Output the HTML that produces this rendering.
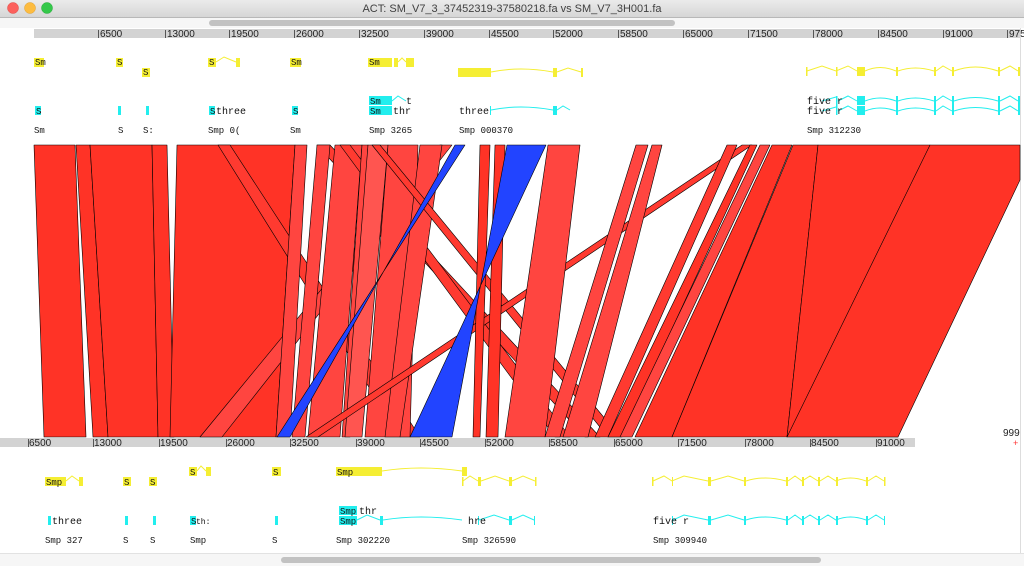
<!DOCTYPE html>
<html><head><meta charset="utf-8"><style>
html,body{margin:0;padding:0;width:1024px;height:566px;overflow:hidden;background:#fff}
svg{display:block}
.r{font-family:"Liberation Sans",sans-serif;font-size:10px;fill:#222}
.m{font-family:"Liberation Mono",monospace;font-size:10px;fill:#111}
.s{font-family:"Liberation Mono",monospace;font-size:9px;fill:#111}
</style></head><body>
<svg width="1024" height="566" viewBox="0 0 1024 566" xmlns="http://www.w3.org/2000/svg">
<defs><linearGradient id="tb" x1="0" y1="0" x2="0" y2="1"><stop offset="0" stop-color="#ebebeb"/><stop offset="1" stop-color="#d6d6d6"/></linearGradient></defs>
<rect x="0" y="0" width="1024" height="17" fill="url(#tb)"/>
<line x1="0" y1="17.5" x2="1024" y2="17.5" stroke="#b8b8b8"/>
<circle cx="13" cy="8" r="5.5" fill="#fc605c" stroke="#de4a45" stroke-width=".5"/>
<circle cx="30" cy="8" r="5.5" fill="#fdbc40" stroke="#de9f2e" stroke-width=".5"/>
<circle cx="47" cy="8" r="5.5" fill="#34c84a" stroke="#27a83a" stroke-width=".5"/>
<text x="512" y="12" text-anchor="middle" font-family="Liberation Sans,sans-serif" font-size="11" fill="#404040">ACT: SM_V7_3_37452319-37580218.fa vs SM_V7_3H001.fa</text>
<rect x="0" y="18" width="1024" height="10" fill="#f6f6f6"/>
<rect x="209" y="20" width="466" height="6" rx="3" fill="#c2c2c2"/>
<line x1="1020.5" y1="28" x2="1020.5" y2="553" stroke="#ddd"/>

<rect x="34" y="29" width="986" height="9" fill="#d3d3d3"/>
<g stroke="#555" stroke-width="1">
<path d="M98.5 30v8M165.5 30v8M229.5 30v8M294.5 30v8M359.5 30v8M424.5 30v8M489.5 30v8M553.5 30v8M618.5 30v8M683.5 30v8M748.5 30v8M813.5 30v8M878.5 30v8M943.5 30v8M1007.5 30v8"/>
</g>
<g class="r"><text x="100" y="37">6500</text><text x="167" y="37">13000</text><text x="231" y="37">19500</text><text x="296" y="37">26000</text><text x="361" y="37">32500</text><text x="426" y="37">39000</text><text x="491" y="37">45500</text><text x="555" y="37">52000</text><text x="620" y="37">58500</text><text x="685" y="37">65000</text><text x="750" y="37">71500</text><text x="815" y="37">78000</text><text x="880" y="37">84500</text><text x="945" y="37">91000</text><text x="1009" y="37">975</text></g>

<g fill="#f5ee33">
<rect x="34" y="58" width="10" height="9"/><rect x="116" y="58" width="7" height="9"/><rect x="142" y="68" width="8" height="9"/>
<rect x="208" y="58" width="8" height="9"/><rect x="236" y="58" width="4" height="9"/><rect x="290" y="58" width="11" height="9"/>
<rect x="368" y="58" width="24" height="9"/><rect x="394" y="58" width="4" height="9"/><rect x="406" y="58" width="8" height="9"/>
<rect x="458" y="68" width="33" height="9"/><rect x="553" y="68" width="4" height="9"/><rect x="581" y="68" width="2" height="9"/>
<rect x="857" y="67" width="8" height="9"/><rect x="806" y="67" width="1.5" height="9"/><rect x="836" y="67" width="1.5" height="9"/><rect x="896" y="67" width="2" height="9"/><rect x="934" y="67" width="2" height="9"/><rect x="952" y="67" width="2" height="9"/><rect x="998" y="67" width="2" height="9"/><rect x="1018" y="67" width="2" height="9"/>
</g>
<g fill="none" stroke="#f5ee33" stroke-width="1">
<path d="M216 62L224 57L236 62M398 62L402 58L406 62M491 72Q520 66 553 72M557 72L568 68L581 72"/>
<path d="M807 71L822 66L836 71L848 66L857 71M865 71Q880 64 896 71M898 71Q915 65 934 71M936 71L943 66L952 71M954 71Q975 63 998 71M1000 71L1010 66L1018 71"/>
</g>
<g class="s"><text x="35" y="65">Sm</text><text x="117" y="65">S</text><text x="143" y="75">S</text><text x="209" y="65">S</text><text x="291" y="65">Sm</text><text x="369" y="65">Sm</text></g>

<g fill="#22eeee">
<rect x="369" y="96" width="23" height="9"/><rect x="369" y="106" width="23" height="9"/>
<rect x="35" y="106" width="6" height="9"/><rect x="118" y="106" width="3" height="9"/><rect x="146" y="106" width="3" height="9"/><rect x="209" y="106" width="6" height="9"/><rect x="292" y="106" width="6" height="9"/>
<rect x="553" y="106" width="4" height="9"/>
<rect x="857" y="96" width="8" height="9"/><rect x="857" y="106" width="8" height="9"/>
<path d="M836 96h1.5v19h-1.5zM896 96h2v19h-2zM934 96h2v19h-2zM952 96h2v19h-2zM998 96h2v19h-2zM1018 96h2v19h-2zM490 106h1v9h-1z"/>
</g>
<g fill="none" stroke="#22eeee" stroke-width="1">
<path d="M392 101L398 96L406 101M491 110Q520 104 553 110M557 110L563 106L570 110"/>
<path d="M822 101L836 97M838 101L848 96L857 101M865 101Q880 95 896 101M898 101Q915 95 934 101M936 101L943 96L952 101M954 101Q975 94 998 101M1000 101L1010 96L1018 101"/>
<path d="M822 111L836 107M838 111L848 106L857 111M865 111Q880 105 896 111M898 111Q915 105 934 111M936 111L943 106L952 111M954 111Q975 104 998 111M1000 111L1010 106L1018 111"/>
</g>
<g class="s"><text x="36" y="114">S</text><text x="210" y="114">S</text><text x="293" y="114">S</text><text x="370" y="104">Sm</text><text x="370" y="114">Sm</text></g>
<g class="m"><text x="216" y="114">three</text><text x="406" y="104">t</text><text x="393" y="114">thr</text><text x="459" y="114">three</text><text x="807" y="104">five r</text><text x="807" y="114">five r</text></g>
<g class="s"><text x="34" y="133">Sm</text><text x="118" y="133">S</text><text x="143" y="133">S:</text><text x="208" y="133">Smp 0(</text><text x="290" y="133">Sm</text><text x="369" y="133">Smp 3265</text><text x="459" y="133">Smp 000370</text><text x="807" y="133">Smp 312230</text></g>

<g stroke="#000" stroke-width="0.6" stroke-linejoin="round">
<polygon fill="#ff3326" points="34,145 75,145 86,437 44,437"/>
<polygon fill="#ff3326" points="76,145 90,145 108,437 93,437"/>
<polygon fill="#ff3326" points="90,145 152,145 158,437 108,437"/>
<polygon fill="#ff3326" points="152,145 167,145 174,437 158,437"/>
<polygon fill="#ff3326" points="177,145 295,145 276,437 170,437"/>
<polygon fill="#ff3a30" points="218,145 230,145 420,437 400,437"/>
<polygon fill="#ff4540" points="440,145 452,145 222,437 200,437"/>
<polygon fill="#ff4540" points="295,145 307,145 290,437 276,437"/>
<polygon fill="#ff3a30" points="317,145 330,145 600,437 585,437"/>
<polygon fill="#ff4540" points="317,145 330,145 305,437 292,437"/>
<polygon fill="#ff4540" points="335,145 362,145 340,437 308,437"/>
<polygon fill="#ff3a30" points="340,145 350,145 570,437 555,437"/>
<polygon fill="#ff4540" points="362,145 368,145 350,437 342,437"/>
<polygon fill="#ff5550" points="368,145 388,145 362,437 345,437"/>
<polygon fill="#ff4540" points="388,145 418,145 410,437 365,437"/>
<polygon fill="#ff4540" points="420,145 442,145 400,437 385,437"/>
<polygon fill="#ff3a30" points="372,145 380,145 620,437 608,437"/>
<polygon fill="#ff3a30" points="742,145 752,145 318,437 306,437"/>
<polygon fill="#ff3326" points="480,145 490,145 480,437 473,437"/>
<polygon fill="#ff3326" points="495,145 505,145 498,437 486,437"/>
<polygon fill="#ff4540" points="548,145 580,145 545,437 505,437"/>
<polygon fill="#ff4540" points="636,145 648,145 560,437 545,437"/>
<polygon fill="#ff4540" points="652,145 662,145 588,437 563,437"/>
<polygon fill="#ff3a30" points="727,145 737,145 608,437 595,437"/>
<polygon fill="#ff3326" points="750,145 757,145 622,437 608,437"/>
<polygon fill="#ff4540" points="760,145 770,145 632,437 620,437"/>
<polygon fill="#ff3326" points="772,145 792,145 672,437 635,437"/>
<polygon fill="#ff3326" points="793,145 818,145 787,437 672,437"/>
<polygon fill="#ff3326" points="818,145 930,145 898,437 787,437"/>
<polygon fill="#ff3326" points="930,145 1020,145 1020,180 898,437 787,437"/>
<polygon fill="#2244ff" points="455,145 465,145 277,437 290,437"/>
<polygon fill="#2244ff" points="507,145 546,145 410,437 452,437"/>
</g>

<rect x="0" y="438" width="915" height="9" fill="#d3d3d3"/>
<g stroke="#555"><path d="M28.5 439v8M93.5 439v8M159.5 439v8M226.5 439v8M290.5 439v8M356.5 439v8M420.5 439v8M485.5 439v8M549.5 439v8M614.5 439v8M678.5 439v8M745.5 439v8M810.5 439v8M876.5 439v8"/></g>
<g class="r"><text x="29" y="446">6500</text><text x="94" y="446">13000</text><text x="160" y="446">19500</text><text x="227" y="446">26000</text><text x="291" y="446">32500</text><text x="357" y="446">39000</text><text x="421" y="446">45500</text><text x="486" y="446">52000</text><text x="550" y="446">58500</text><text x="615" y="446">65000</text><text x="679" y="446">71500</text><text x="746" y="446">78000</text><text x="811" y="446">84500</text><text x="877" y="446">91000</text></g>
<text x="1003" y="436" class="r">999</text>
<text x="1013" y="446" font-family="Liberation Sans,sans-serif" font-size="9" fill="#f33">+</text>

<g fill="#f5ee33">
<rect x="45" y="477" width="21" height="9"/><rect x="79" y="477" width="4" height="9"/><rect x="123" y="477" width="8" height="9"/><rect x="149" y="477" width="8" height="9"/>
<rect x="189" y="467" width="8" height="9"/><rect x="206" y="467" width="5" height="9"/><rect x="272" y="467" width="9" height="9"/>
<rect x="336" y="467" width="46" height="9"/><rect x="462" y="467" width="5" height="9"/>
<path d="M462 477h1.5v9h-1.5zM478 477h3v9h-3zM509 477h3v9h-3zM535 477h1.5v9h-1.5z"/>
<path d="M652 477h1.5v9h-1.5zM708 477h3v9h-3zM744 477h2v9h-2zM786 477h2v9h-2zM802 477h2v9h-2zM818 477h2v9h-2zM836 477h2v9h-2zM866 477h2v9h-2zM884 477h1.5v9h-1.5zM672 477h1v9h-1z"/>
</g>
<g fill="none" stroke="#f5ee33">
<path d="M66 481L72 476L79 481M197 471L201 466L206 471M382 471Q420 465 462 471M463 481L470 476L478 481M481 481L495 476L509 481M512 481L523 476L535 481"/>
<path d="M653 481L664 476L672 481L684 476L708 481M711 481L728 476L744 481M746 481Q765 475 786 481M788 481L795 476L802 481L810 476L818 481M820 481L828 476L836 481Q850 475 866 481M868 481L876 476L884 481"/>
</g>
<g class="s"><text x="46" y="485">Smp</text><text x="124" y="485">S</text><text x="150" y="485">S</text><text x="190" y="475">S</text><text x="273" y="475">S</text><text x="337" y="475">Smp</text></g>

<g fill="#22eeee">
<rect x="339" y="506" width="18" height="9"/><rect x="339" y="516" width="18" height="9"/>
<rect x="48" y="516" width="3" height="9"/><rect x="125" y="516" width="3" height="9"/><rect x="153" y="516" width="3" height="9"/><rect x="190" y="516" width="6" height="9"/><rect x="275" y="516" width="3" height="9"/>
<path d="M380 516h3v9h-3zM478 516h1v9h-1zM509 516h3v9h-3zM534 516h1v9h-1zM672 516h1v9h-1zM708 516h3v9h-3zM744 516h2v9h-2zM786 516h2v9h-2zM802 516h2v9h-2zM818 516h2v9h-2zM836 516h2v9h-2zM866 516h2v9h-2zM884 516h1v9h-1z"/>
</g>
<g fill="none" stroke="#22eeee">
<path d="M357 520L367 515L380 520M383 520Q420 514 462 520M479 520L494 515L509 520M512 520L523 515L534 520"/>
<path d="M673 520L684 515L708 520M711 520L728 515L744 520M746 520Q765 514 786 520M788 520L795 515L802 520L810 515L818 520M820 520L828 515L836 520Q850 514 866 520M868 520L876 515L884 520"/>
</g>
<g class="s"><text x="340" y="514">Smp</text><text x="340" y="524">Smp</text><text x="191" y="524">S</text></g>
<g class="m"><text x="52" y="524">three</text><text x="196" y="524" font-size="8">th:</text><text x="359" y="514">thr</text><text x="468" y="524">hre</text><text x="653" y="524">five r</text></g>
<g class="s"><text x="45" y="543">Smp 327</text><text x="123" y="543">S</text><text x="150" y="543">S</text><text x="190" y="543">Smp</text><text x="272" y="543">S</text><text x="336" y="543">Smp 302220</text><text x="462" y="543">Smp 326590</text><text x="653" y="543">Smp 309940</text></g>

<rect x="0" y="553" width="1024" height="13" fill="#f6f6f6"/>
<line x1="0" y1="553.5" x2="1024" y2="553.5" stroke="#e2e2e2"/>
<rect x="281" y="557" width="540" height="6" rx="3" fill="#c2c2c2"/>
</svg>
</body></html>
